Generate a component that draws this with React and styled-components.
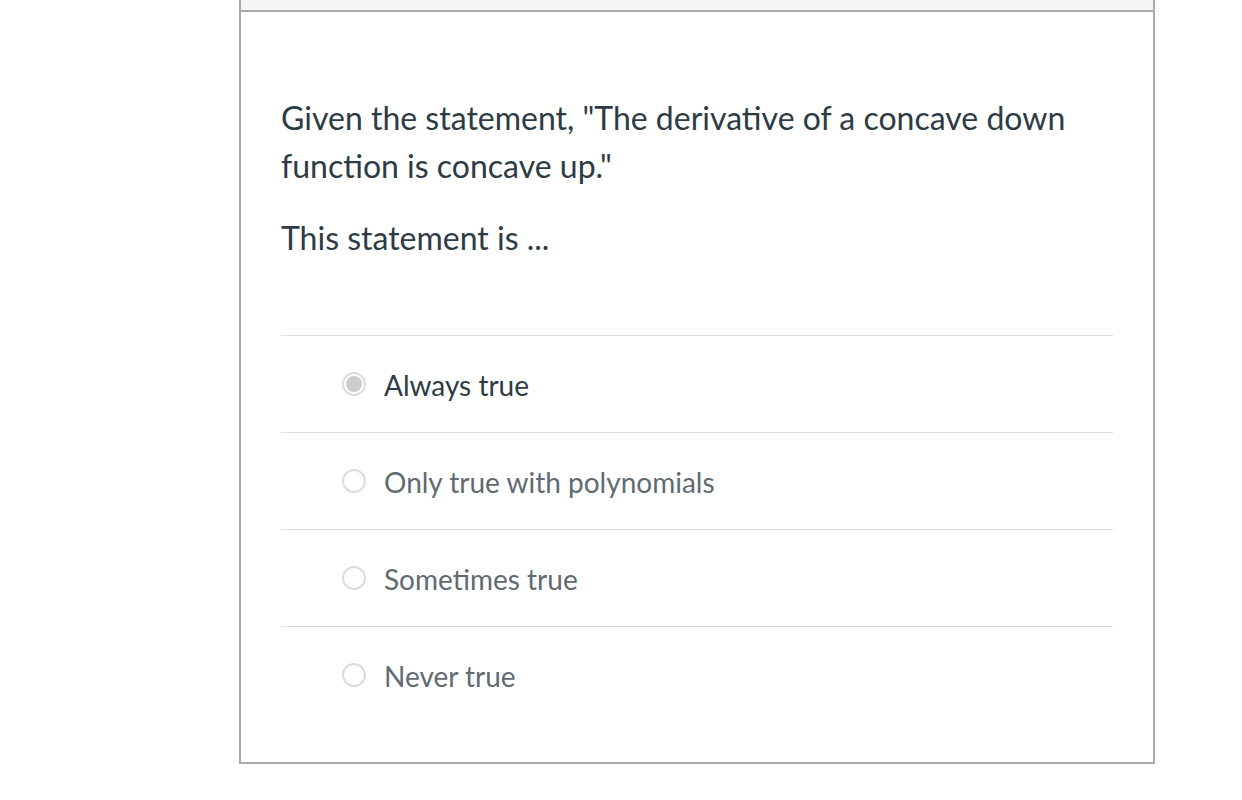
import React from 'react';
import styled, { createGlobalStyle } from 'styled-components';

const GlobalStyle = createGlobalStyle`
  body {
    margin: 0;
    background: #ffffff;
    font-family: Lato, "Noto Sans", sans-serif;
  }
`;

const Page = styled.div`
  padding-left: 239px;
`;

const Card = styled.div`
  width: 912px;
  border: 2px solid #aaaaaa;
  border-top: 0;
  background: #ffffff;
`;

const Header = styled.div`
  height: 10px;
  background-color: #f5f5f5;
  border-bottom: 2px solid #aaaaaa;
`;

const Body = styled.div`
  padding: 82px 40px 39px 40px;
`;

const Paragraph = styled.p`
  margin: 0 0 24px 0;
  font-size: 32px;
  line-height: 48px;
  color: #2d3b45;
`;

const Answers = styled.div`
  margin-top: 73px;
`;

const Answer = styled.label`
  display: flex;
  align-items: center;
  gap: 18px;
  height: 96px;
  padding-left: 61px;
  border-top: 1px solid #dddddd;
  cursor: pointer;
`;

const Radio = styled.span`
  box-sizing: border-box;
  width: 24px;
  height: 24px;
  border-radius: 50%;
  border: 2px solid #dddddd;
  background: #ffffff;
  display: flex;
  align-items: center;
  justify-content: center;
  flex-shrink: 0;

  &::after {
    content: '';
    width: 16px;
    height: 16px;
    border-radius: 50%;
    background: ${({ $checked }) => ($checked ? '#cccccc' : 'transparent')};
  }
`;

const AnswerText = styled.span`
  font-size: 28px;
  line-height: 34px;
  padding-top: 2px;
  color: ${({ $checked }) => ($checked ? '#2d3b45' : '#5f6b73')};
`;

const answers = ['Always true', 'Only true with polynomials', 'Sometimes true', 'Never true'];

const App = () => {
  const [selected, setSelected] = React.useState(0);

  return (
    <React.Fragment>
      <GlobalStyle />
      <Page>
        <Card>
          <Header />
          <Body>
            <Paragraph>
              Given the statement, "The derivative of a concave down function is concave up."
            </Paragraph>
            <Paragraph>This statement is ...</Paragraph>
            <Answers>
              {answers.map((text, i) => (
                <Answer key={text} onClick={() => setSelected(i)}>
                  <Radio $checked={selected === i} />
                  <AnswerText $checked={selected === i}>{text}</AnswerText>
                </Answer>
              ))}
            </Answers>
          </Body>
        </Card>
      </Page>
    </React.Fragment>
  );
};

export default App;
